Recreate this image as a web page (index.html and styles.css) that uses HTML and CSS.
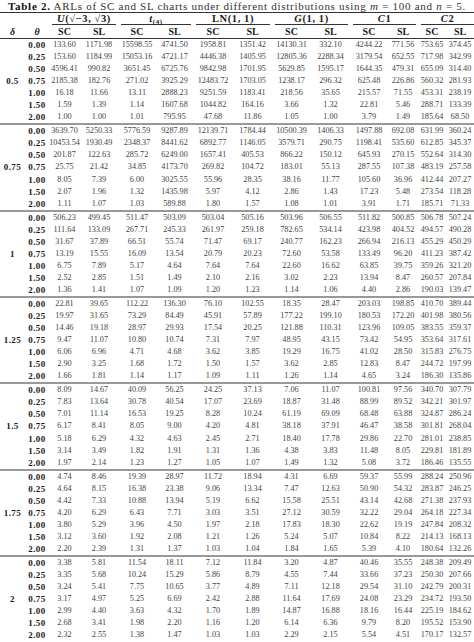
FILE: index.html
```html
<!DOCTYPE html>
<html>
<head>
<meta charset="utf-8">
<link rel="stylesheet" href="styles.css">
</head>
<body>
<div class="caption"><b>Table 2.</b> ARLs of SC and SL charts under different distributions using <i>m</i> = 100 and <i>n</i> = 5.</div>
<table class="arl">
<colgroup>
<col class="w-d"><col class="w-t"><col class="w-u1"><col class="w-u2"><col class="w-t1"><col class="w-t2"><col class="w-l1"><col class="w-l2"><col class="w-g1"><col class="w-g2"><col class="w-c1"><col class="w-c2"><col class="w-e1"><col class="w-e2">
</colgroup>
<thead>
<tr class="h1">
<th></th><th></th>
<th colspan="2"><div class="grp"><i>U</i>(<span class="rad">√<span class="ov">−3</span></span>, <span class="rad">√<span class="ov">3</span></span>)</div></th>
<th colspan="2"><div class="grp"><i>t</i><sub>(4)</sub></div></th>
<th colspan="2"><div class="grp">LN(1, 1)</div></th>
<th colspan="2"><div class="grp"><i>G</i>(1, 1)</div></th>
<th colspan="2"><div class="grp"><i>C</i>1</div></th>
<th colspan="2"><div class="grp last"><i>C</i>2</div></th>
</tr>
<tr class="h2">
<th><i>δ</i></th><th><i>θ</i></th>
<th>SC</th><th>SL</th><th>SC</th><th>SL</th><th>SC</th><th>SL</th><th>SC</th><th>SL</th><th>SC</th><th>SL</th><th>SC</th><th>SL</th>
</tr>
</thead>
<tbody>
<tr><th class="d"></th><th class="t">0.00</th><td>133.60</td><td>1171.98</td><td>15598.55</td><td>4741.50</td><td>1958.81</td><td>1351.42</td><td>14130.31</td><td>332.10</td><td>4244.22</td><td>771.56</td><td>753.65</td><td>374.45</td></tr>
<tr><th class="d"></th><th class="t">0.25</th><td>153.60</td><td>1184.99</td><td>15053.16</td><td>4721.17</td><td>4446.38</td><td>1405.95</td><td>12805.36</td><td>2288.34</td><td>3179.54</td><td>652.55</td><td>717.98</td><td>342.99</td></tr>
<tr><th class="d"></th><th class="t">0.50</th><td>4596.41</td><td>990.82</td><td>3651.45</td><td>6725.76</td><td>9842.98</td><td>1701.95</td><td>5629.85</td><td>1595.17</td><td>1644.35</td><td>479.31</td><td>655.09</td><td>314.40</td></tr>
<tr><th class="d">0.5</th><th class="t">0.75</th><td>2185.38</td><td>182.76</td><td>271.02</td><td>3925.29</td><td>12483.72</td><td>1703.05</td><td>1238.17</td><td>296.32</td><td>625.48</td><td>226.86</td><td>560.32</td><td>281.93</td></tr>
<tr><th class="d"></th><th class="t">1.00</th><td>16.18</td><td>11.66</td><td>13.11</td><td>2888.23</td><td>9251.59</td><td>1183.41</td><td>218.56</td><td>35.65</td><td>215.57</td><td>71.55</td><td>453.31</td><td>238.19</td></tr>
<tr><th class="d"></th><th class="t">1.50</th><td>1.59</td><td>1.39</td><td>1.14</td><td>1607.68</td><td>1044.82</td><td>164.16</td><td>3.66</td><td>1.32</td><td>22.81</td><td>5.46</td><td>288.71</td><td>133.39</td></tr>
<tr><th class="d"></th><th class="t">2.00</th><td>1.00</td><td>1.00</td><td>1.01</td><td>795.95</td><td>47.68</td><td>11.86</td><td>1.05</td><td>1.00</td><td>3.79</td><td>1.49</td><td>185.64</td><td>68.50</td></tr>
</tbody>
<tbody>
<tr><th class="d"></th><th class="t">0.00</th><td>3639.70</td><td>5250.33</td><td>5776.59</td><td>9287.89</td><td>12139.71</td><td>1784.44</td><td>10500.39</td><td>1406.33</td><td>1497.88</td><td>692.08</td><td>631.99</td><td>360.24</td></tr>
<tr><th class="d"></th><th class="t">0.25</th><td>10453.54</td><td>1930.49</td><td>2348.37</td><td>8441.62</td><td>6892.77</td><td>1146.05</td><td>3579.71</td><td>290.75</td><td>1198.41</td><td>535.60</td><td>612.85</td><td>345.37</td></tr>
<tr><th class="d"></th><th class="t">0.50</th><td>201.87</td><td>122.63</td><td>285.72</td><td>6249.00</td><td>1657.41</td><td>405.53</td><td>866.22</td><td>150.12</td><td>645.93</td><td>270.15</td><td>552.64</td><td>314.30</td></tr>
<tr><th class="d">0.75</th><th class="t">0.75</th><td>25.75</td><td>21.42</td><td>34.85</td><td>4173.70</td><td>269.82</td><td>104.72</td><td>183.01</td><td>55.13</td><td>287.55</td><td>107.38</td><td>483.19</td><td>257.58</td></tr>
<tr><th class="d"></th><th class="t">1.00</th><td>8.05</td><td>7.39</td><td>6.00</td><td>3025.55</td><td>55.96</td><td>28.35</td><td>38.16</td><td>11.77</td><td>105.60</td><td>36.96</td><td>412.44</td><td>207.27</td></tr>
<tr><th class="d"></th><th class="t">1.50</th><td>2.07</td><td>1.96</td><td>1.32</td><td>1435.98</td><td>5.97</td><td>4.12</td><td>2.86</td><td>1.43</td><td>17.23</td><td>5.48</td><td>273.54</td><td>118.28</td></tr>
<tr><th class="d"></th><th class="t">2.00</th><td>1.11</td><td>1.07</td><td>1.03</td><td>589.88</td><td>1.80</td><td>1.57</td><td>1.08</td><td>1.01</td><td>3.91</td><td>1.71</td><td>185.71</td><td>71.33</td></tr>
</tbody>
<tbody>
<tr><th class="d"></th><th class="t">0.00</th><td>506.23</td><td>499.45</td><td>511.47</td><td>503.09</td><td>503.04</td><td>505.16</td><td>503.96</td><td>506.55</td><td>511.82</td><td>500.85</td><td>506.78</td><td>507.24</td></tr>
<tr><th class="d"></th><th class="t">0.25</th><td>111.64</td><td>133.09</td><td>267.71</td><td>245.33</td><td>261.97</td><td>259.18</td><td>782.65</td><td>534.14</td><td>423.98</td><td>404.52</td><td>494.57</td><td>490.28</td></tr>
<tr><th class="d"></th><th class="t">0.50</th><td>31.67</td><td>37.89</td><td>66.51</td><td>55.74</td><td>71.47</td><td>69.17</td><td>240.77</td><td>162.23</td><td>266.94</td><td>216.13</td><td>455.29</td><td>450.29</td></tr>
<tr><th class="d">1</th><th class="t">0.75</th><td>13.19</td><td>15.55</td><td>16.09</td><td>13.54</td><td>20.79</td><td>20.23</td><td>72.60</td><td>53.58</td><td>133.49</td><td>96.20</td><td>411.23</td><td>387.42</td></tr>
<tr><th class="d"></th><th class="t">1.00</th><td>6.75</td><td>7.89</td><td>5.17</td><td>4.64</td><td>7.64</td><td>7.64</td><td>22.60</td><td>16.62</td><td>63.85</td><td>39.75</td><td>359.26</td><td>321.20</td></tr>
<tr><th class="d"></th><th class="t">1.50</th><td>2.52</td><td>2.85</td><td>1.51</td><td>1.49</td><td>2.10</td><td>2.16</td><td>3.02</td><td>2.23</td><td>13.94</td><td>8.47</td><td>260.57</td><td>207.84</td></tr>
<tr><th class="d"></th><th class="t">2.00</th><td>1.36</td><td>1.41</td><td>1.07</td><td>1.09</td><td>1.20</td><td>1.23</td><td>1.14</td><td>1.06</td><td>4.40</td><td>2.86</td><td>190.03</td><td>139.47</td></tr>
</tbody>
<tbody>
<tr><th class="d"></th><th class="t">0.00</th><td>22.81</td><td>39.65</td><td>112.22</td><td>136.30</td><td>76.10</td><td>102.55</td><td>18.35</td><td>28.47</td><td>203.03</td><td>198.85</td><td>410.70</td><td>389.44</td></tr>
<tr><th class="d"></th><th class="t">0.25</th><td>19.97</td><td>31.65</td><td>73.29</td><td>84.49</td><td>45.91</td><td>57.89</td><td>177.22</td><td>199.10</td><td>180.53</td><td>172.20</td><td>401.98</td><td>380.56</td></tr>
<tr><th class="d"></th><th class="t">0.50</th><td>14.46</td><td>19.18</td><td>28.97</td><td>29.93</td><td>17.54</td><td>20.25</td><td>121.88</td><td>110.31</td><td>123.96</td><td>109.05</td><td>383.55</td><td>359.37</td></tr>
<tr><th class="d">1.25</th><th class="t">0.75</th><td>9.47</td><td>11.07</td><td>10.80</td><td>10.74</td><td>7.31</td><td>7.97</td><td>48.95</td><td>43.15</td><td>73.42</td><td>54.95</td><td>353.64</td><td>317.61</td></tr>
<tr><th class="d"></th><th class="t">1.00</th><td>6.06</td><td>6.96</td><td>4.71</td><td>4.68</td><td>3.62</td><td>3.85</td><td>19.29</td><td>16.75</td><td>41.02</td><td>28.50</td><td>315.83</td><td>276.75</td></tr>
<tr><th class="d"></th><th class="t">1.50</th><td>2.90</td><td>3.25</td><td>1.68</td><td>1.72</td><td>1.50</td><td>1.57</td><td>3.62</td><td>2.85</td><td>12.83</td><td>8.47</td><td>244.72</td><td>197.99</td></tr>
<tr><th class="d"></th><th class="t">2.00</th><td>1.66</td><td>1.81</td><td>1.14</td><td>1.17</td><td>1.09</td><td>1.11</td><td>1.26</td><td>1.14</td><td>4.65</td><td>3.24</td><td>186.30</td><td>135.86</td></tr>
</tbody>
<tbody>
<tr><th class="d"></th><th class="t">0.00</th><td>8.09</td><td>14.67</td><td>40.09</td><td>56.25</td><td>24.25</td><td>37.13</td><td>7.06</td><td>11.07</td><td>100.81</td><td>97.56</td><td>340.70</td><td>307.79</td></tr>
<tr><th class="d"></th><th class="t">0.25</th><td>7.83</td><td>13.64</td><td>30.78</td><td>40.54</td><td>17.07</td><td>23.69</td><td>18.87</td><td>31.48</td><td>88.99</td><td>89.52</td><td>342.21</td><td>301.97</td></tr>
<tr><th class="d"></th><th class="t">0.50</th><td>7.01</td><td>11.14</td><td>16.53</td><td>19.25</td><td>8.28</td><td>10.24</td><td>61.19</td><td>69.09</td><td>68.48</td><td>63.88</td><td>324.87</td><td>286.24</td></tr>
<tr><th class="d">1.5</th><th class="t">0.75</th><td>6.17</td><td>8.41</td><td>8.05</td><td>9.00</td><td>4.20</td><td>4.81</td><td>38.18</td><td>37.91</td><td>46.47</td><td>38.58</td><td>301.81</td><td>268.04</td></tr>
<tr><th class="d"></th><th class="t">1.00</th><td>5.18</td><td>6.29</td><td>4.32</td><td>4.63</td><td>2.45</td><td>2.71</td><td>18.40</td><td>17.78</td><td>29.86</td><td>22.70</td><td>281.01</td><td>238.85</td></tr>
<tr><th class="d"></th><th class="t">1.50</th><td>3.14</td><td>3.49</td><td>1.82</td><td>1.91</td><td>1.31</td><td>1.36</td><td>4.38</td><td>3.83</td><td>11.48</td><td>8.05</td><td>229.81</td><td>181.89</td></tr>
<tr><th class="d"></th><th class="t">2.00</th><td>1.97</td><td>2.14</td><td>1.23</td><td>1.27</td><td>1.05</td><td>1.07</td><td>1.49</td><td>1.32</td><td>5.08</td><td>3.72</td><td>186.46</td><td>135.55</td></tr>
</tbody>
<tbody>
<tr><th class="d"></th><th class="t">0.00</th><td>4.74</td><td>8.46</td><td>19.39</td><td>28.97</td><td>11.72</td><td>18.94</td><td>4.31</td><td>6.69</td><td>59.37</td><td>55.99</td><td>288.24</td><td>250.96</td></tr>
<tr><th class="d"></th><th class="t">0.25</th><td>4.64</td><td>8.15</td><td>16.38</td><td>23.38</td><td>9.06</td><td>13.34</td><td>7.47</td><td>12.63</td><td>50.90</td><td>54.32</td><td>283.87</td><td>246.25</td></tr>
<tr><th class="d"></th><th class="t">0.50</th><td>4.42</td><td>7.33</td><td>10.88</td><td>13.94</td><td>5.19</td><td>6.62</td><td>15.58</td><td>25.51</td><td>43.14</td><td>42.68</td><td>271.38</td><td>237.93</td></tr>
<tr><th class="d">1.75</th><th class="t">0.75</th><td>4.20</td><td>6.29</td><td>6.43</td><td>7.71</td><td>3.03</td><td>3.51</td><td>27.12</td><td>30.59</td><td>32.22</td><td>29.04</td><td>264.18</td><td>227.34</td></tr>
<tr><th class="d"></th><th class="t">1.00</th><td>3.80</td><td>5.29</td><td>3.96</td><td>4.50</td><td>1.97</td><td>2.18</td><td>17.83</td><td>18.30</td><td>22.62</td><td>19.19</td><td>247.84</td><td>208.32</td></tr>
<tr><th class="d"></th><th class="t">1.50</th><td>3.12</td><td>3.60</td><td>1.92</td><td>2.08</td><td>1.21</td><td>1.26</td><td>5.24</td><td>5.07</td><td>10.84</td><td>8.22</td><td>214.13</td><td>168.13</td></tr>
<tr><th class="d"></th><th class="t">2.00</th><td>2.20</td><td>2.39</td><td>1.31</td><td>1.37</td><td>1.03</td><td>1.04</td><td>1.84</td><td>1.65</td><td>5.39</td><td>4.10</td><td>180.64</td><td>132.26</td></tr>
</tbody>
<tbody>
<tr><th class="d"></th><th class="t">0.00</th><td>3.38</td><td>5.81</td><td>11.54</td><td>18.11</td><td>7.12</td><td>11.84</td><td>3.20</td><td>4.87</td><td>40.46</td><td>35.55</td><td>248.38</td><td>209.49</td></tr>
<tr><th class="d"></th><th class="t">0.25</th><td>3.35</td><td>5.68</td><td>10.24</td><td>15.29</td><td>5.86</td><td>8.79</td><td>4.55</td><td>7.44</td><td>33.66</td><td>37.23</td><td>250.30</td><td>207.66</td></tr>
<tr><th class="d"></th><th class="t">0.50</th><td>3.24</td><td>5.41</td><td>7.75</td><td>10.65</td><td>3.77</td><td>4.89</td><td>7.11</td><td>12.18</td><td>29.54</td><td>31.10</td><td>242.79</td><td>200.31</td></tr>
<tr><th class="d">2</th><th class="t">0.75</th><td>3.17</td><td>4.97</td><td>5.25</td><td>6.69</td><td>2.42</td><td>2.88</td><td>11.64</td><td>17.69</td><td>24.08</td><td>23.29</td><td>234.72</td><td>193.50</td></tr>
<tr><th class="d"></th><th class="t">1.00</th><td>2.99</td><td>4.40</td><td>3.63</td><td>4.32</td><td>1.70</td><td>1.89</td><td>14.87</td><td>16.88</td><td>18.16</td><td>16.44</td><td>225.19</td><td>184.62</td></tr>
<tr><th class="d"></th><th class="t">1.50</th><td>2.68</td><td>3.41</td><td>1.98</td><td>2.20</td><td>1.16</td><td>1.20</td><td>6.14</td><td>6.36</td><td>9.79</td><td>8.20</td><td>195.52</td><td>153.90</td></tr>
<tr><th class="d"></th><th class="t">2.00</th><td>2.32</td><td>2.55</td><td>1.38</td><td>1.47</td><td>1.03</td><td>1.03</td><td>2.29</td><td>2.15</td><td>5.54</td><td>4.51</td><td>170.17</td><td>132.57</td></tr>
</tbody>
</table>
</body>
</html>
```
FILE: styles.css
```css
html, body {
  margin: 0;
  padding: 0;
  background: #fff;
}
body {
  font-family: "Liberation Serif", "Times New Roman", serif;
  color: #222;
  overflow: hidden;
}
.caption {
  height: 12px;
  line-height: 12px;
  font-size: 11px;
  letter-spacing: 0.72px;
  text-align: center;
  white-space: nowrap;
  color: #333;
  border-bottom: 1px solid #333;
}
.caption b { color: #111; }

.arl {
  border-collapse: separate;
  border-spacing: 0;
  table-layout: fixed;
  width: 474px;
}
.arl th, .arl td {
  padding: 0;
  text-align: center;
  white-space: nowrap;
  vertical-align: middle;
}
.w-d { width: 25px; }
.w-t { width: 24px; }
.w-u1 { width: 31px; }
.w-u2 { width: 38px; }
.w-t1 { width: 38px; }
.w-t2 { width: 37px; }
.w-l1 { width: 40px; }
.w-l2 { width: 39px; }
.w-g1 { width: 39px; }
.w-g2 { width: 39px; }
.w-c1 { width: 38px; }
.w-c2 { width: 30px; }
.w-e1 { width: 28px; }
.w-e2 { width: 28px; }

.h1 th {
  font-size: 10.5px;
  font-weight: bold;
  color: #1a1a1a;
  line-height: 11px;
  height: 12px;
  letter-spacing: 0.6px;
}
.grp {
  margin: 0 2px 0 3px;
  line-height: 11px;
  border-bottom: 1px solid #333;
}
.grp.last { margin-right: 0; }
.grp sub {
  font-size: 7px;
  line-height: 0;
  vertical-align: -1.5px;
}
.rad { white-space: nowrap; }
.ov {
  border-top: 1px solid #222;
  padding-top: 0;
}
.h2 th {
  font-size: 10px;
  font-weight: bold;
  color: #1a1a1a;
  line-height: 13px;
  border-bottom: 1px solid #333;
}

.arl tbody td {
  font-size: 8.2px;
  color: #444;
  line-height: 12.05px;
}
.arl tbody th {
  font-size: 9px;
  font-weight: bold;
  color: #1a1a1a;
  line-height: 12.05px;
  letter-spacing: 0.4px;
}
.arl tbody + tbody tr:first-child > * {
  border-top: 2px solid #999;
}
```
